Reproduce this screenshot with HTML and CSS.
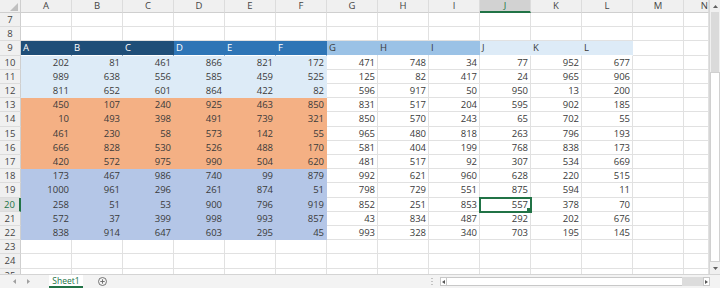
FILE: index.html
```html
<!DOCTYPE html>
<html>

<head>
    <meta charset="utf-8">
    <title>Sheet1</title>
    <link rel="stylesheet" href="styles.css">
</head>

<body>
    <div class="window">
        <div class="sheet">
            <div class="gridWrap">
                <table class="grid">
                    <colgroup>
                        <col class="cRh">
                        <col class="cCol"><col class="cCol"><col class="cCol"><col class="cCol"><col class="cCol"><col class="cCol"><col class="cCol">
                        <col class="cCol"><col class="cCol"><col class="cCol"><col class="cCol"><col class="cCol"><col class="cCol">
                        <col class="cLast">
                    </colgroup>
                    <tr class="hRow">
                        <th class="corner"><span class="tri"></span></th>
                        <th class="hd">A</th><th class="hd">B</th><th class="hd">C</th><th class="hd">D</th><th class="hd">E</th><th class="hd">F</th><th class="hd">G</th>
                        <th class="hd">H</th><th class="hd">I</th><th class="hd on">J</th><th class="hd">K</th><th class="hd">L</th><th class="hd">M</th><th class="hd cut">N</th>
                    </tr>
                    <tr class="r14">
                        <th class="rh">7</th>
                        <td></td><td></td><td></td><td></td><td></td><td></td><td></td><td></td><td></td><td></td><td></td><td></td><td></td><td></td>
                    </tr>
                    <tr class="r14">
                        <th class="rh">8</th>
                        <td></td><td></td><td></td><td></td><td></td><td></td><td></td><td></td><td></td><td></td><td></td><td></td><td></td><td></td>
                    </tr>
                    <tr class="r15">
                        <th class="rh">9</th>
                        <td class="lbl nv">A</td><td class="lbl nv">B</td><td class="lbl nv">C</td>
                        <td class="lbl md">D</td><td class="lbl md">E</td><td class="lbl md">F</td>
                        <td class="lbl lt">G</td><td class="lbl lt">H</td><td class="lbl lt">I</td>
                        <td class="lbl vl">J</td><td class="lbl vl">K</td><td class="lbl vl">L</td>
                        <td></td><td></td>
                    </tr>
                    <tr class="r14">
                        <th class="rh">10</th>
                        <td class="b1">202</td><td class="b1">81</td><td class="b1">461</td><td class="b1">866</td><td class="b1">821</td><td class="b1">172</td>
                        <td>471</td><td>748</td><td>34</td><td>77</td><td>952</td><td>677</td><td></td><td></td>
                    </tr>
                    <tr class="r14">
                        <th class="rh">11</th>
                        <td class="b1">989</td><td class="b1">638</td><td class="b1">556</td><td class="b1">585</td><td class="b1">459</td><td class="b1">525</td>
                        <td>125</td><td>82</td><td>417</td><td>24</td><td>965</td><td>906</td><td></td><td></td>
                    </tr>
                    <tr class="r14">
                        <th class="rh">12</th>
                        <td class="b1">811</td><td class="b1">652</td><td class="b1">601</td><td class="b1">864</td><td class="b1">422</td><td class="b1">82</td>
                        <td>596</td><td>917</td><td>50</td><td>950</td><td>13</td><td>200</td><td></td><td></td>
                    </tr>
                    <tr class="r14">
                        <th class="rh">13</th>
                        <td class="or">450</td><td class="or">107</td><td class="or">240</td><td class="or">925</td><td class="or">463</td><td class="or">850</td>
                        <td>831</td><td>517</td><td>204</td><td>595</td><td>902</td><td>185</td><td></td><td></td>
                    </tr>
                    <tr class="r15">
                        <th class="rh">14</th>
                        <td class="or">10</td><td class="or">493</td><td class="or">398</td><td class="or">491</td><td class="or">739</td><td class="or">321</td>
                        <td>850</td><td>570</td><td>243</td><td>65</td><td>702</td><td>55</td><td></td><td></td>
                    </tr>
                    <tr class="r14">
                        <th class="rh">15</th>
                        <td class="or">461</td><td class="or">230</td><td class="or">58</td><td class="or">573</td><td class="or">142</td><td class="or">55</td>
                        <td>965</td><td>480</td><td>818</td><td>263</td><td>796</td><td>193</td><td></td><td></td>
                    </tr>
                    <tr class="r14">
                        <th class="rh">16</th>
                        <td class="or">666</td><td class="or">828</td><td class="or">530</td><td class="or">526</td><td class="or">488</td><td class="or">170</td>
                        <td>581</td><td>404</td><td>199</td><td>768</td><td>838</td><td>173</td><td></td><td></td>
                    </tr>
                    <tr class="r14">
                        <th class="rh">17</th>
                        <td class="or">420</td><td class="or">572</td><td class="or">975</td><td class="or">990</td><td class="or">504</td><td class="or">620</td>
                        <td>481</td><td>517</td><td>92</td><td>307</td><td>534</td><td>669</td><td></td><td></td>
                    </tr>
                    <tr class="r14">
                        <th class="rh">18</th>
                        <td class="b2">173</td><td class="b2">467</td><td class="b2">986</td><td class="b2">740</td><td class="b2">99</td><td class="b2">879</td>
                        <td>992</td><td>621</td><td>960</td><td>628</td><td>220</td><td>515</td><td></td><td></td>
                    </tr>
                    <tr class="r15">
                        <th class="rh">19</th>
                        <td class="b2">1000</td><td class="b2">961</td><td class="b2">296</td><td class="b2">261</td><td class="b2">874</td><td class="b2">51</td>
                        <td>798</td><td>729</td><td>551</td><td>875</td><td>594</td><td>11</td><td></td><td></td>
                    </tr>
                    <tr class="r14">
                        <th class="rh on">20</th>
                        <td class="b2">258</td><td class="b2">51</td><td class="b2">53</td><td class="b2">900</td><td class="b2">796</td><td class="b2">919</td>
                        <td>852</td><td>251</td><td>853</td><td class="sel">557</td><td>378</td><td>70</td><td></td><td></td>
                    </tr>
                    <tr class="r14">
                        <th class="rh">21</th>
                        <td class="b2">572</td><td class="b2">37</td><td class="b2">399</td><td class="b2">998</td><td class="b2">993</td><td class="b2">857</td>
                        <td>43</td><td>834</td><td>487</td><td>292</td><td>202</td><td>676</td><td></td><td></td>
                    </tr>
                    <tr class="r14">
                        <th class="rh">22</th>
                        <td class="b2">838</td><td class="b2">914</td><td class="b2">647</td><td class="b2">603</td><td class="b2">295</td><td class="b2">45</td>
                        <td>993</td><td>328</td><td>340</td><td>703</td><td>195</td><td>145</td><td></td><td></td>
                    </tr>
                    <tr class="r14">
                        <th class="rh">23</th>
                        <td></td><td></td><td></td><td></td><td></td><td></td><td></td><td></td><td></td><td></td><td></td><td></td><td></td><td></td>
                    </tr>
                    <tr class="r15">
                        <th class="rh">24</th>
                        <td></td><td></td><td></td><td></td><td></td><td></td><td></td><td></td><td></td><td></td><td></td><td></td><td></td><td></td>
                    </tr>
                    <tr class="r14">
                        <th class="rh">25</th>
                        <td></td><td></td><td></td><td></td><td></td><td></td><td></td><td></td><td></td><td></td><td></td><td></td><td></td><td></td>
                    </tr>
                </table>
            </div>
            <div class="vscroll">
                <div class="sbBtn">
                    <svg width="5" height="3" viewBox="0 0 5 3"><path d="M0 3L2.5 0L5 3Z" fill="#606060"/></svg>
                </div>
                <div class="vThumb"></div>
                <div class="vTrack"></div>
                <div class="sbBtn">
                    <svg width="5" height="3" viewBox="0 0 5 3"><path d="M0 0L2.5 3L5 0Z" fill="#606060"/></svg>
                </div>
            </div>
        </div>
        <div class="tabbar">
            <div class="navBtn first">
                <svg width="3" height="5" viewBox="0 0 3 5"><path d="M3 0L0 2.5L3 5Z" fill="#a0a0a0"/></svg>
            </div>
            <div class="navBtn">
                <svg width="3" height="5" viewBox="0 0 3 5"><path d="M0 0L3 2.5L0 5Z" fill="#a0a0a0"/></svg>
            </div>
            <div class="tab">Sheet1</div>
            <div class="addSheet">
                <svg width="9" height="9" viewBox="0 0 9 9">
                    <circle cx="4.5" cy="4.5" r="4" fill="none" stroke="#666" stroke-width="0.9"/>
                    <path d="M4.5 2.3v4.4M2.3 4.5h4.4" stroke="#666" stroke-width="0.9"/>
                </svg>
            </div>
            <div class="spacer"></div>
            <div class="dots">
                <svg width="2" height="7" viewBox="0 0 2 7">
                    <rect x="0.5" y="0" width="1" height="1" fill="#909090"/>
                    <rect x="0.5" y="3" width="1" height="1" fill="#909090"/>
                    <rect x="0.5" y="6" width="1" height="1" fill="#909090"/>
                </svg>
            </div>
            <div class="hscroll">
                <div class="hBtn">
                    <svg width="3" height="4" viewBox="0 0 3 4"><path d="M3 0L0 2L3 4Z" fill="#555"/></svg>
                </div>
                <div class="hThumb"></div>
                <div class="hTrack"></div>
                <div class="hBtn">
                    <svg width="3" height="4" viewBox="0 0 3 4"><path d="M0 0L3 2L0 4Z" fill="#555"/></svg>
                </div>
            </div>
        </div>
    </div>
</body>

</html>
```

FILE: styles.css
```css
* {
    box-sizing: border-box;
}

body {
    margin: 0;
    font-family: "Open Sans", "Noto Sans", sans-serif;
    background: #ffffff;
}

.window {
    width: 720px;
    height: 288px;
    display: flex;
    flex-direction: column;
    overflow: hidden;
}

.sheet {
    height: 274px;
    display: flex;
    overflow: hidden;
}

.gridWrap {
    width: 709px;
    height: 274px;
    overflow: hidden;
}

/* grid */
.grid {
    table-layout: fixed;
    width: 709px;
    border-spacing: 0;
    font-size: 9.5px;
    line-height: 1;
    color: #3a3a3a;
}
.cRh { width: 21px; }
.cCol { width: 51px; }
.cLast { width: 25px; }

.hRow { height: 13px; }
.r14 { height: 14px; }
.r15 { height: 15px; }

.grid td {
    padding: 0 2px 0 0;
    text-align: right;
    white-space: nowrap;
    overflow: hidden;
    border-right: 1px solid #e1e1e1;
    border-bottom: 1px solid #e1e1e1;
}

.grid th {
    font-weight: normal;
    color: #444444;
    background: #f0f0f0;
    padding: 0;
    overflow: hidden;
    white-space: nowrap;
}

.corner {
    border-right: 1px solid #cfcfcf;
    border-bottom: 1px solid #cfcfcf;
}
.corner .tri {
    display: block;
    width: 0;
    height: 0;
    margin: 2px 2px 0 auto;
    border-left: 8px solid transparent;
    border-bottom: 8px solid #c0c0c0;
}

.hd {
    text-align: center;
    border-right: 1px solid #dcdcdc;
    border-bottom: 1px solid #cfcfcf;
}
.hd.cut {
    text-align: right;
    padding-right: 0;
}
.hd.on {
    background: #d2d2d2;
    border-bottom: 2px solid #217346;
    color: #217346;
}

.rh {
    text-align: center;
    border-right: 1px solid #cfcfcf;
    border-bottom: 1px solid #dcdcdc;
}
.rh.on {
    background: #e1e1e1;
    color: #217346;
    border-right: 2px solid #217346;
}

/* row 9 header band */
.grid td.lbl {
    text-align: left;
    padding: 0 0 0 2px;
    border-bottom-color: #ffffff;
}
.grid td.nv { background: #1f4e78; border-right-color: #1f4e78; color: #ffffff; }
.grid td.md { background: #2e75b6; border-right-color: #2e75b6; color: #ffffff; }
.grid td.lt { background: #9bc2e6; border-right-color: #9bc2e6; color: #3a3a3a; }
.grid td.vl { background: #ddebf7; border-right-color: #ddebf7; color: #3a3a3a; }

/* filled blocks */
.grid td.b1 { background: #ddebf7; border-color: #ddebf7; }
.grid td.or { background: #f4b084; border-color: #f4b084; }
.grid td.b2 { background: #b4c6e7; border-color: #b4c6e7; }

.grid td.sel {
    position: relative;
    outline: 2px solid #217346;
    outline-offset: -1px;
}
.grid td.sel::after {
    content: "";
    position: absolute;
    right: -3px;
    bottom: -3px;
    width: 5px;
    height: 5px;
    background: #217346;
    border: 1px solid #ffffff;
}

/* scrollbars */
.vscroll {
    width: 11px;
    display: flex;
    flex-direction: column;
    background: #f0f0f0;
    border-left: 1px solid #d6d6d6;
}
.sbBtn {
    height: 12px;
    display: flex;
    align-items: center;
    justify-content: center;
}
.vThumb {
    height: 60px;
    background: #dadada;
    margin: 0 1px;
}
.vTrack {
    flex: 1;
    background: #ffffff;
    border: 1px solid #d0d0d0;
}

.tabbar {
    height: 14px;
    display: flex;
    align-items: stretch;
    background: #f3f3f3;
    border-top: 1px solid #d4d4d4;
}
.navBtn {
    width: 14px;
    display: flex;
    align-items: center;
    justify-content: center;
}
.navBtn.first {
    margin-left: 7px;
}
.tab {
    margin-left: 14px;
    width: 34px;
    background: #ffffff;
    color: #217346;
    text-align: center;
    line-height: 11px;
    border-bottom: 2px solid #217346;
    font-size: 8.5px;
}
.addSheet {
    margin-left: 15px;
    display: flex;
    align-items: center;
}
.spacer {
    flex: 1;
}
.dots {
    width: 8px;
    margin-right: 4px;
    display: flex;
    align-items: center;
    justify-content: center;
}
.hscroll {
    width: 270px;
    margin-right: 10px;
    display: flex;
    align-self: center;
    height: 9px;
}
.hBtn {
    width: 7px;
    display: flex;
    align-items: center;
    justify-content: center;
    background: #ffffff;
    border: 1px solid #c8c8c8;
}
.hThumb {
    width: 235px;
    background: #ffffff;
    border-top: 1px solid #c8c8c8;
    border-bottom: 1px solid #c8c8c8;
}
.hTrack {
    flex: 1;
    background: #dcdcdc;
}
```
